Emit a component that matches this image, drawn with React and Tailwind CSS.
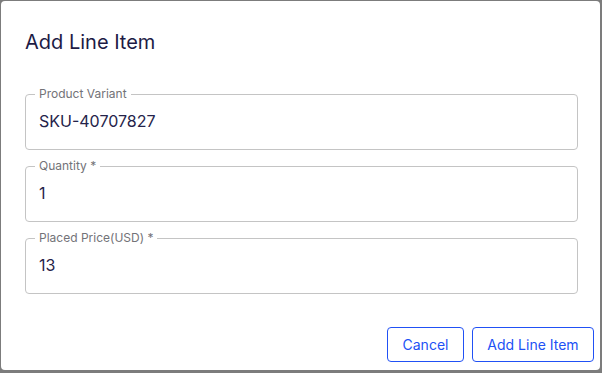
import React, { useState } from 'react';

const fields = [
    { label: 'Product Variant', value: 'SKU-40707827', required: false },
    { label: 'Quantity', value: '1', required: true },
    { label: 'Placed Price(USD)', value: '13', required: true },
];

const OutlinedField = ({ label, value, required }) => {
    const [text, setText] = useState(value);
    return (
        <fieldset className="h-[64px] rounded border border-[#c4c4c4] px-[13px] pt-0 pb-0">
            <legend className="-ml-[4px] px-[4px] text-[12px] leading-[16px] text-[#737378]">
                {label}{required ? ' *' : ''}
            </legend>
            <input
                value={text}
                onChange={(e) => setText(e.target.value)}
                className="mt-[7px] block w-full bg-transparent text-[16px] leading-[24px] text-[#25234a] outline-none"
            />
        </fieldset>
    );
};

const App = () => {
    return (
        <div className="h-[373px] w-[602px] bg-[#7c7c7c] pl-px pt-px" style={{ fontFamily: 'Inter, "Noto Sans", sans-serif' }}>
            <div className="flex h-[369px] w-[599px] flex-col rounded-[4px] bg-white">
                <h2 className="pl-[24px] pt-[27px] text-[20px] leading-[28px] font-normal text-[#1d1b45]">Add Line Item</h2>
                <div className="mt-[30px] flex flex-col gap-[8px] pl-[24px] pr-[22px]">
                    {fields.map((f) => (
                        <OutlinedField key={f.label} {...f} />
                    ))}
                </div>
                <div className="mt-auto mb-[8px] flex justify-end gap-[8px] pr-[6px]">
                    <button className="h-[35px] w-[77px] rounded-[4px] border border-[#2151f5] text-[14px] text-[#2151f5]">Cancel</button>
                    <button className="h-[35px] w-[122px] rounded-[4px] border border-[#2151f5] text-[14px] text-[#2151f5]">Add Line Item</button>
                </div>
            </div>
        </div>
    );
};

export default App;
